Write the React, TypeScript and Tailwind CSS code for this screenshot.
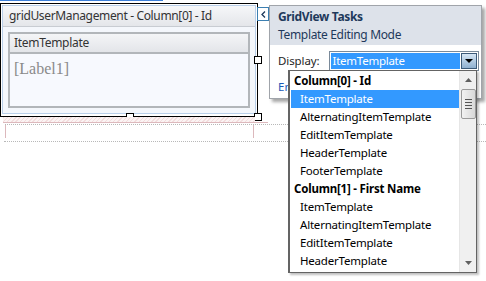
const groups = [
  {
    title: "Column[0] - Id",
    items: ["ItemTemplate", "AlternatingItemTemplate", "EditItemTemplate", "HeaderTemplate", "FooterTemplate"],
  },
  {
    title: "Column[1] - First Name",
    items: ["ItemTemplate", "AlternatingItemTemplate", "EditItemTemplate", "HeaderTemplate"],
  },
];

const Handle = ({ className }: { className: string }) => (
  <div className={`absolute w-[8px] h-[8px] bg-white border border-black ${className}`} />
);

const GridDesigner = () => {
  return (
    <div className="relative w-[258px] h-[114px] shrink-0 border border-black">
      <div className="m-[1px] h-[109px] border border-[#b9cfe9] bg-[#f4f7fc] flex flex-col">
        <div className="h-[21px] flex items-center px-[6px] bg-gradient-to-b from-[#f6f7f9] to-[#e4e6ea] border-b border-[#c8ccd2] text-[12px] tracking-[-0.35px] text-[#333]">
          gridUserManagement - Column[0] - Id
        </div>
        <div className="flex-1 px-[5px] pt-[5px] pb-[5px]">
          <div className="h-full border-2 border-[#b2b6ba] bg-[#f7f9fe] flex flex-col">
            <div className="h-[20px] flex items-center px-[4px] bg-gradient-to-b from-[#f4f5f7] to-[#e3e5e9] border-b-2 border-[#b2b6ba] text-[12px] tracking-[-0.3px] text-[#333]">
              ItemTemplate
            </div>
            <div className="px-[4px] pt-[3px] text-[16px] text-[#8a8a8a] font-['Liberation_Serif',serif]">
              [Label1]
            </div>
          </div>
        </div>
      </div>
      <Handle className="left-[125px] bottom-[-5px]" />
      <Handle className="right-[-5px] bottom-[-5px]" />
      <Handle className="right-[-5px] top-[52px]" />
    </div>
  );
};

const DropdownList = () => {
  return (
    <div className="absolute left-[288px] top-[70px] w-[189px] h-[203px] bg-white border border-[#646464] border-l-2 shadow-[2px_2px_2px_rgba(0,0,0,0.25)] flex">
      <div className="flex-1 pt-[1px] pl-[1px]">
        {groups.map((g, gi) => (
          <div key={g.title}>
            <div className="h-[18px] flex items-center px-[3px] font-bold text-[11.5px] tracking-[-0.2px] text-black">
              {g.title}
            </div>
            {g.items.map((it, i) => (
              <div
                key={it + i}
                className={`h-[18px] flex items-center pl-[9px] text-[11.5px] tracking-[-0.2px] ${
                  gi === 0 && i === 0 ? "bg-[#3399ff] text-white" : "text-black"
                }`}
              >
                {it}
              </div>
            ))}
          </div>
        ))}
      </div>
      <div className="w-[17px] bg-[#f0f0f0] border-l border-[#e6e6e6] flex flex-col items-center">
        <div className="h-[18px] flex items-center justify-center">
          <svg width="7" height="4" viewBox="0 0 7 4">
            <path d="M0 4 L3.5 0 L7 4 Z" fill="#606060" />
          </svg>
        </div>
        <div className="w-[15px] h-[30px] rounded-[2px] border border-[#9a9a9a] bg-gradient-to-r from-[#f2f2f2] to-[#d8d8d8] flex flex-col items-center justify-center gap-[2px]">
          <div className="w-[7px] h-[1px] bg-[#555]" />
          <div className="w-[7px] h-[1px] bg-[#555]" />
          <div className="w-[7px] h-[1px] bg-[#555]" />
          <div className="w-[7px] h-[1px] bg-[#555]" />
        </div>
        <div className="flex-1" />
        <div className="h-[18px] flex items-center justify-center">
          <svg width="7" height="4" viewBox="0 0 7 4">
            <path d="M0 0 L3.5 4 L7 0 Z" fill="#606060" />
          </svg>
        </div>
      </div>
    </div>
  );
};

const TasksPanel = () => {
  return (
    <div className="absolute left-[269px] top-[5px] w-[213px] h-[94px] bg-white border border-[#a0a4aa] shadow-[3px_3px_3px_rgba(0,0,0,0.35)] flex flex-col">
      <div className="h-[39px] bg-[#dde2ea] px-[8px] pt-[2px] flex flex-col text-[#1e395b] leading-[18px]">
        <div className="font-bold text-[12px] tracking-[-0.35px]">GridView Tasks</div>
        <div className="text-[12px] tracking-[-0.33px]">Template Editing Mode</div>
      </div>
      <div className="flex items-center pl-[8px] pt-[6px] gap-[9px]">
        <span className="text-[11.5px] tracking-[-0.1px] text-[#1e1e1e]">Display:</span>
        <div className="w-[150px] h-[20px] border border-[#7a8a9a] flex p-[1px]">
          <div className="flex-1 bg-[#3399ff] text-white text-[11.5px] tracking-[-0.25px] flex items-center pl-[2px]">
            ItemTemplate
          </div>
          <div className="w-[16px] ml-[1px] border border-[#3c5a78] bg-gradient-to-b from-[#d6e6f4] to-[#8fb0cf] flex items-center justify-center">
            <svg width="8" height="4" viewBox="0 0 8 4">
              <path d="M0 0 L4 4 L8 0 Z" fill="#000" />
            </svg>
          </div>
        </div>
      </div>
      <div className="pl-[8px] pt-[7px] leading-[17px] text-[11.5px] text-[#1c5ab8] w-[19px] overflow-hidden whitespace-nowrap">
        End Template Editing
      </div>
    </div>
  );
};

export default function App() {
  return (
    <div className="relative w-[486px] h-[281px] bg-white overflow-hidden flex flex-col font-['Noto_Sans',sans-serif]">
      <div className="h-[1px] w-[163px] shrink-0 bg-[#3c7fd8]" />
      <div className="h-[2px] shrink-0" />
      <GridDesigner />
      <div className="relative shrink-0 flex flex-col">
        <div className="ml-[3px] w-[252px] h-[5px] bg-[repeating-linear-gradient(135deg,#f3dede_0px,#f3dede_1px,#fbf3f3_1px,#fbf3f3_3px)]" />
        <div className="ml-[3px] w-[265px] h-[1px] bg-[#dcb8bc]" />
        <div className="h-[1px]" />
        <div className="ml-[5px] w-[481px] h-0 border-t border-dotted border-[#b8b8b8]" />
        <div className="flex justify-between w-[249px] ml-[5px] h-[13px]">
          <div className="w-[1px] h-full bg-[#dcb8bc]" />
          <div className="w-[1px] h-full bg-[#dcb8bc]" />
        </div>
        <div className="h-[3px]" />
        <div className="ml-[4px] w-[482px] h-0 border-t border-dotted border-[#b8b8b8]" />
      </div>

      <button className="absolute left-[257px] top-[7px] w-[12px] h-[14px] bg-white border border-[#3c7fb1] flex items-center justify-center">
        <svg width="5" height="7" viewBox="0 0 5 7">
          <path d="M4 0.5 L1 3.5 L4 6.5" fill="none" stroke="#1e395b" strokeWidth="1.3" />
        </svg>
      </button>
      <TasksPanel />
      <DropdownList />
    </div>
  );
}
